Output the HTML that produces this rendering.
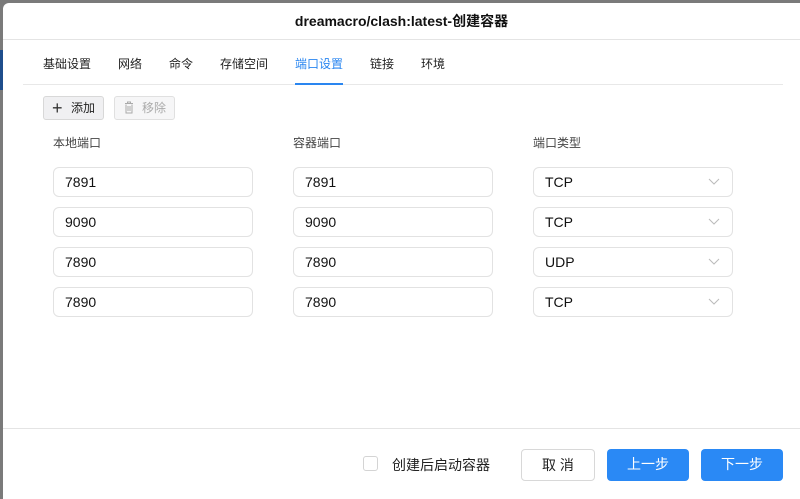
<!DOCTYPE html>
<html><head><meta charset="utf-8"><style>
*{box-sizing:border-box;margin:0;padding:0}
body{width:800px;height:499px;background:#7a7a7a;position:relative;overflow:hidden;font-family:"Liberation Sans","Noto Sans CJK SC",sans-serif;color:#222}
.strip{position:absolute;left:0;top:50px;width:3px;height:40px;background:#1f4e8c}
.dlg{position:absolute;left:3px;top:3px;width:797px;height:496px;background:#fff;border-radius:6px 0 0 0}
.abs{position:absolute}
.title{top:0;left:0;width:797px;height:37px;line-height:36px;text-align:center;font-weight:bold;font-size:14px;color:#111;border-bottom:1px solid #e4e4e4}
.tab{top:52px;font-size:12px;color:#222}
.inp{width:200px;height:30px;border:1px solid #e2e2e2;border-radius:6px;font-size:14px;padding-left:11px;line-height:28px;color:#111}
.lbl{top:131px;font-size:12px;color:#444}
.btn{border-radius:4px;font-size:14px;text-align:center;line-height:30px;height:32px}
</style></head><body>
<div class="strip"></div>
<div class="dlg">
<div class="abs title">dreamacro/clash:latest-创建容器</div>
<div class="abs tab" style="left:40px">基础设置</div>
<div class="abs tab" style="left:115px">网络</div>
<div class="abs tab" style="left:166px">命令</div>
<div class="abs tab" style="left:217px">存储空间</div>
<div class="abs tab" style="left:292px;color:#2a86f0">端口设置</div>
<div class="abs tab" style="left:367px">链接</div>
<div class="abs tab" style="left:418px">环境</div>
<div class="abs" style="left:20px;top:81px;width:760px;height:1px;background:#e8e8e8"></div>
<div class="abs" style="left:292px;top:80px;width:48px;height:2px;background:#2a86f0"></div>
<div class="abs" style="left:40px;top:93px;width:61px;height:24px;border:1px solid #d8d8d8;border-radius:3px;background:#f0f0f2;font-size:12px;line-height:22px;padding-left:27px">添加</div>
<div class="abs" style="left:49px;top:98px;font-size:18px;line-height:14px;color:#333">+</div>
<div class="abs" style="left:111px;top:93px;width:61px;height:24px;border:1px solid #e0e0e0;border-radius:3px;background:#f6f6f7;font-size:12px;line-height:22px;padding-left:27px;color:#aaa">移除</div>
<svg class="abs" style="left:121px;top:98px" width="10" height="13" viewBox="0 0 10 13"><path d="M1 2.5h8M3.5 2.5V1h3v1.5M2 3.5v8.5h6V3.5M4 5v5M6 5v5" fill="none" stroke="#aaa" stroke-width="1"/></svg>
<div class="abs lbl" style="left:50px">本地端口</div>
<div class="abs lbl" style="left:290px">容器端口</div>
<div class="abs lbl" style="left:530px">端口类型</div>

<div class="abs inp" style="left:50px;top:164px">7891</div>
<div class="abs inp" style="left:290px;top:164px">7891</div>
<div class="abs inp" style="left:530px;top:164px">TCP</div>
<div class="abs inp" style="left:50px;top:204px">9090</div>
<div class="abs inp" style="left:290px;top:204px">9090</div>
<div class="abs inp" style="left:530px;top:204px">TCP</div>
<div class="abs inp" style="left:50px;top:244px">7890</div>
<div class="abs inp" style="left:290px;top:244px">7890</div>
<div class="abs inp" style="left:530px;top:244px">UDP</div>
<div class="abs inp" style="left:50px;top:284px">7890</div>
<div class="abs inp" style="left:290px;top:284px">7890</div>
<div class="abs inp" style="left:530px;top:284px">TCP</div>
<svg class="abs" style="left:705px;top:174px" width="12" height="130" viewBox="0 0 12 130"><g fill="none" stroke="#bbb" stroke-width="1"><path d="M1 2l5 5 5-5"/><path d="M1 42l5 5 5-5"/><path d="M1 82l5 5 5-5"/><path d="M1 122l5 5 5-5"/></g></svg>

<div class="abs" style="left:0;top:425px;width:797px;height:1px;background:#e4e4e4"></div>
<div class="abs" style="left:360px;top:453px;width:15px;height:15px;border:1px solid #d4d4d4;border-radius:3px"></div>
<div class="abs" style="left:389px;top:452px;font-size:14px;color:#222">创建后启动容器</div>
<div class="abs btn" style="left:518px;top:446px;width:74px;border:1px solid #d8d8d8;color:#222">取 消</div>
<div class="abs btn" style="left:604px;top:446px;width:82px;background:#2a89f5;color:#fff">上一步</div>
<div class="abs btn" style="left:698px;top:446px;width:82px;background:#2a89f5;color:#fff">下一步</div>
</div>
</body></html>
